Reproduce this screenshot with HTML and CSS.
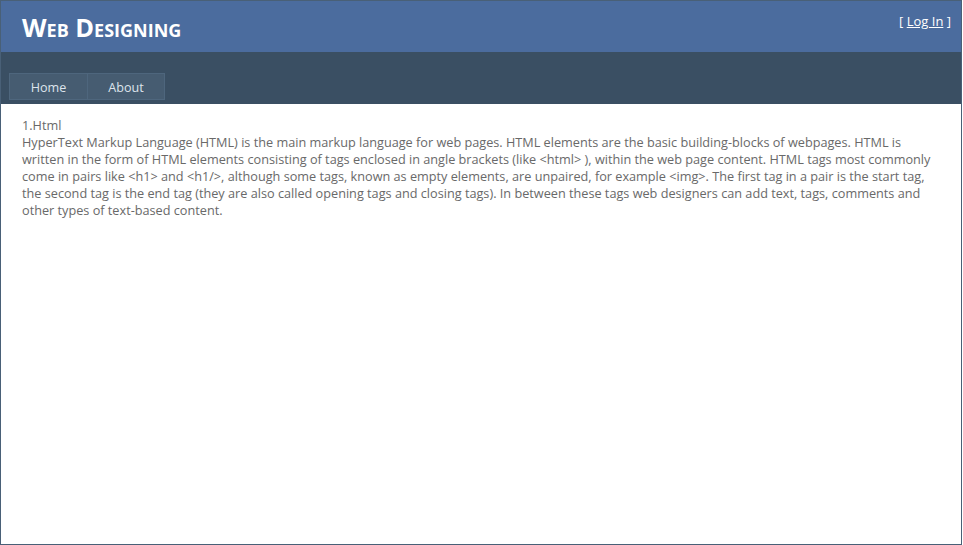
FILE: index.html
```html
<!DOCTYPE html>
<html>
<head>
<meta charset="utf-8">
<link rel="stylesheet" href="styles.css">
</head>
<body>
<div class="page">
  <div class="header">
    <div class="title-bar">
      <h1 class="title">Web Designing</h1>
      <div class="login">[ <a href="#" class="login-link">Log In</a> ]</div>
    </div>
    <div class="menu-bar">
      <ul class="menu">
        <li class="menu-item"><a href="#" class="menu-link">Home</a></li>
        <li class="menu-item"><a href="#" class="menu-link">About</a></li>
      </ul>
    </div>
  </div>
  <div class="main">
    <div class="line">1.Html</div>
    <div class="line">HyperText Markup Language (HTML) is the main markup language for web pages. HTML elements are the basic building-blocks of webpages. HTML is</div>
    <div class="line">written in the form of HTML elements consisting of tags enclosed in angle brackets (like &lt;html&gt; ), within the web page content. HTML tags most commonly</div>
    <div class="line">come in pairs like &lt;h1&gt; and &lt;h1/&gt;, although some tags, known as empty elements, are unpaired, for example &lt;img&gt;. The first tag in a pair is the start tag,</div>
    <div class="line">the second tag is the end tag (they are also called opening tags and closing tags). In between these tags web designers can add text, tags, comments and</div>
    <div class="line">other types of text-based content.</div>
  </div>
</div>
</body>
</html>
```
FILE: styles.css
```css
html, body {
  margin: 0;
  padding: 0;
  background: #ffffff;
}
body {
  font-family: "Open Sans", "Noto Sans", sans-serif;
  font-size: 12.7px;
  color: #696969;
}
.page {
  width: 960px;
  height: 543px;
  border: 1px solid #496077;
  background: #ffffff;
  display: flex;
  flex-direction: column;
}
.header {
  display: flex;
  flex-direction: column;
}
.title-bar {
  height: 51px;
  background: #4b6c9e;
  display: flex;
  justify-content: space-between;
  align-items: flex-start;
}
.title {
  margin: 0;
  padding: 10px 0 0 21px;
  font-family: "Open Sans", "Noto Sans", sans-serif;
  font-size: 25.4px;
  font-weight: 700;
  font-variant: small-caps;
  color: #ffffff;
  line-height: 32px;
}
.login {
  padding: 11px 10px 0 0;
  color: #ffffff;
  font-size: 13px;
  line-height: 18px;
}
.login-link {
  color: #ffffff;
  text-decoration: underline;
}
.menu-bar {
  height: 52px;
  background: #3a4f63;
  box-sizing: border-box;
  padding: 21px 0 0 8px;
}
.menu {
  list-style: none;
  margin: 0;
  padding: 0;
  display: flex;
}
.menu-item {
  display: block;
}
.menu-link {
  display: block;
  box-sizing: border-box;
  height: 27px;
  padding: 1px 0 0 0;
  line-height: 25px;
  background: #465c71;
  border: 1px solid #4e667d;
  color: #dde4ec;
  text-decoration: none;
  font-size: 12.6px;
  text-align: center;
}
.menu-item + .menu-item .menu-link {
  margin-left: -1px;
}
.menu-item:first-child .menu-link {
  width: 79px;
}
.menu-item:last-child .menu-link {
  width: 78px;
}
.main {
  padding: 13px 10px 0 21px;
}
.line {
  line-height: 17px;
  white-space: nowrap;
}
```
